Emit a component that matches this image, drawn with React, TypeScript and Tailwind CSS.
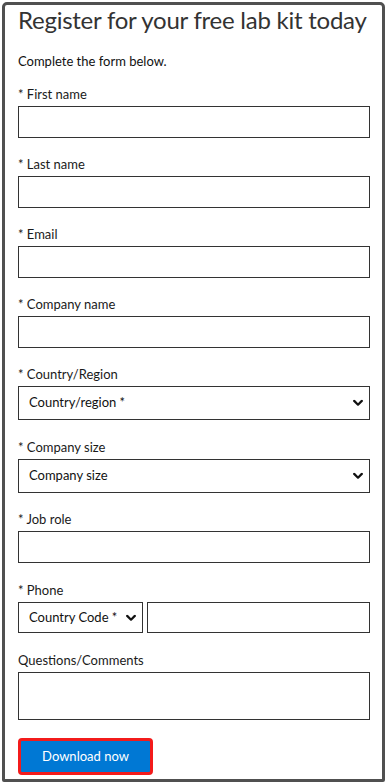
import type { ReactNode } from "react";

const font = { fontFamily: 'Lato, "Open Sans", "Noto Sans", sans-serif' };

function Chevron() {
  return (
    <svg width="10" height="7" viewBox="0 0 10 7" className="pointer-events-none absolute right-[7px] top-1/2 -translate-y-1/2">
      <path d="M1.2 1.4 L5 5.2 L8.8 1.4" fill="none" stroke="#111" strokeWidth="2.2" strokeLinecap="round" strokeLinejoin="round" />
    </svg>
  );
}

function Field({ label, children, className = "mb-4" }: { label: string; children: ReactNode; className?: string }) {
  return (
    <div className={className}>
      <label className="block text-[13px] leading-[20px] text-[#1a1a1a] mb-[2px]">{label}</label>
      {children}
    </div>
  );
}

function TextInput() {
  return <input type="text" className="block w-full h-[32px] border border-[#333] bg-white px-[10px] outline-none" />;
}

function Select({ placeholder, className = "w-full", height = "h-[34px]" }: { placeholder: string; className?: string; height?: string }) {
  return (
    <div className={`relative ${className}`}>
      <select
        defaultValue=""
        className={`block w-full ${height} appearance-none border border-[#333] bg-white pl-[10px] pr-[24px] text-[13px] text-[#111] outline-none`}
        style={font}
      >
        <option value="">{placeholder}</option>
      </select>
      <Chevron />
    </div>
  );
}

export default function App() {
  return (
    <div className="bg-white w-[388px] h-[784px] pt-[2px] pl-[2px] pr-[3px]" style={font}>
      <div className="h-[780px] border-[3px] border-[#505050] rounded-t-[5px] rounded-b-[2px] pl-[13px] pr-[12px]">
        <h1 className="text-[24px] leading-[32px] tracking-[-0.25px] text-[#333] font-normal -mt-[1px] whitespace-nowrap">
          Register for your free lab kit today
        </h1>
        <p className="text-[13px] leading-[20px] text-[#111] mt-[15px] mb-[13px]">Complete the form below.</p>

        <Field label="* First name"><TextInput /></Field>
        <Field label="* Last name"><TextInput /></Field>
        <Field label="* Email"><TextInput /></Field>
        <Field label="* Company name"><TextInput /></Field>
        <Field label="* Country/Region" className="mb-[17px]"><Select placeholder="Country/region *" /></Field>
        <Field label="* Company size"><Select placeholder="Company size" /></Field>
        <Field label="* Job role" className="mb-[17px]"><TextInput /></Field>
        <Field label="* Phone" className="mb-[17px]">
          <div className="flex gap-[4px]">
            <Select placeholder="Country Code *" className="w-[130px]" height="h-[31px]" />
            <input type="text" className="block flex-1 h-[31px] border border-[#333] bg-white px-[10px] outline-none" />
          </div>
        </Field>
        <Field label="Questions/Comments" className="mb-[18px]">
          <textarea className="block w-full h-[48px] border border-[#333] bg-white resize-none outline-none" />
        </Field>

        <button className="w-[135px] h-[37px] border-[3px] border-[#f31b1b] rounded-[4px] bg-[#0078d4] text-white text-[13px]" style={font}>
          Download now
        </button>
      </div>
    </div>
  );
}
